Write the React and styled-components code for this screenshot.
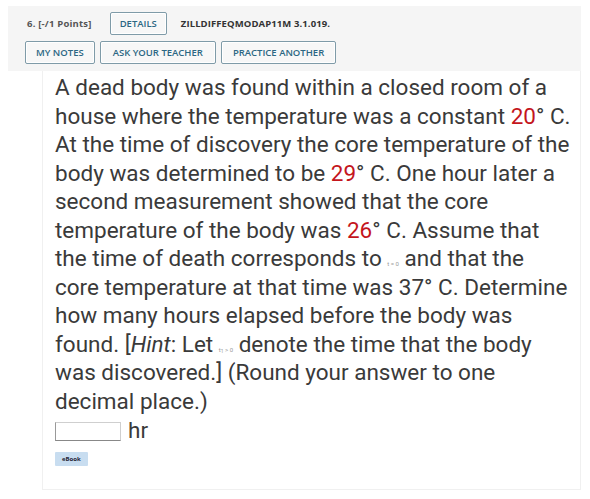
import React from 'react';
import styled, { createGlobalStyle } from 'styled-components';

const Global = createGlobalStyle`
  html, body { margin: 0; padding: 0; background: #fff; }
`;

const Page = styled.div`
  padding: 6px 9px 0 8px;
  width: 590px;
  box-sizing: border-box;
`;

const Header = styled.div`
  background: #f5f5f5;
  padding: 6px 0 7px 17px;
  display: flex;
  flex-direction: column;
  gap: 6px;
  font-family: "Open Sans", sans-serif;
`;

const Row = styled.div`
  display: flex;
  align-items: center;
  gap: 5px;
`;

const Points = styled.span`
  font-size: 9.5px;
  font-weight: 700;
  color: #555;
  letter-spacing: 0.2px;
  margin: 0 13px 0 2px;
`;

const Code = styled.span`
  font-size: 9.5px;
  font-weight: 700;
  color: #333;
  letter-spacing: 0.1px;
  margin-left: 9px;
`;

const Btn = styled.button`
  font-family: "Open Sans", sans-serif;
  font-size: 9.5px;
  font-weight: 600;
  color: #2c6783;
  background: #f7f7f7;
  border: 1px solid #7f9ba8;
  border-radius: 2px;
  height: 23px;
  padding: 0 ${p => p.$pad || 10}px;
  box-shadow: inset 0 0 0 1px #fff;
`;

const Panel = styled.div`
  margin-left: 34px;
  border: 1px solid #f0f0f0;
  border-top: none;
  padding: 2px 0 23px 12px;
  font-family: Roboto, sans-serif;
  color: #3a3a3a;
`;

const Text = styled.p`
  margin: 0;
  width: 518px;
  font-size: 22.5px;
  line-height: 28.5px;
`;

const Red = styled.span`
  color: #c4151c;
`;

const Tiny = styled.span`
  font-size: 6px;
  line-height: 0;
  color: #999;
  sub { font-size: 5px; line-height: 0; vertical-align: -1px; }
`;

const Answer = styled.div`
  display: flex;
  align-items: center;
  gap: 7px;
  margin-top: 1px;
  font-size: 22.5px;
  line-height: 28px;
`;

const Input = styled.div`
  width: 64px;
  height: 17px;
  border: 1px solid #cfcfcf;
  border-bottom-color: #888;
  border-left-color: #999;
  background: #fff;
  margin-top: 2px;
`;

const EBook = styled.div`
  margin-top: 8px;
  display: inline-block;
  background: #c8ddf0;
  border-radius: 1px;
  padding: 3px 7px;
  font-family: "Open Sans", sans-serif;
  font-size: 6px;
  font-weight: 700;
  color: #223;
`;

export default function App() {
  return (
    <Page>
      <Global />
      <Header>
        <Row>
          <Points>6. [-/1 Points]</Points>
          <Btn $pad={9}>DETAILS</Btn>
          <Code>ZILLDIFFEQMODAP11M 3.1.019.</Code>
        </Row>
        <Row>
          <Btn $pad={10}>MY NOTES</Btn>
          <Btn $pad={12}>ASK YOUR TEACHER</Btn>
          <Btn $pad={11}>PRACTICE ANOTHER</Btn>
        </Row>
      </Header>
      <Panel>
        <Text>
          A dead body was found within a closed room of a house where the temperature was a constant{' '}
          <Red>20</Red>°&nbsp;C. At the time of discovery the core temperature of the body was determined to be{' '}
          <Red>29</Red>°&nbsp;C. One hour later a second measurement showed that the core temperature of the body was{' '}
          <Red>26</Red>°&nbsp;C. Assume that the time of death corresponds to <Tiny>t = 0</Tiny> and that the core
          temperature at that time was 37°&nbsp;C. Determine how many hours elapsed before the body was found. [
          <i>Hint</i>: Let <Tiny>t<sub>1</sub> &gt; 0</Tiny> denote the time that the body was discovered.] (Round
          your answer to one decimal place.)
        </Text>
        <Answer>
          <Input />
          <span>hr</span>
        </Answer>
        <EBook>eBook</EBook>
      </Panel>
    </Page>
  );
}
